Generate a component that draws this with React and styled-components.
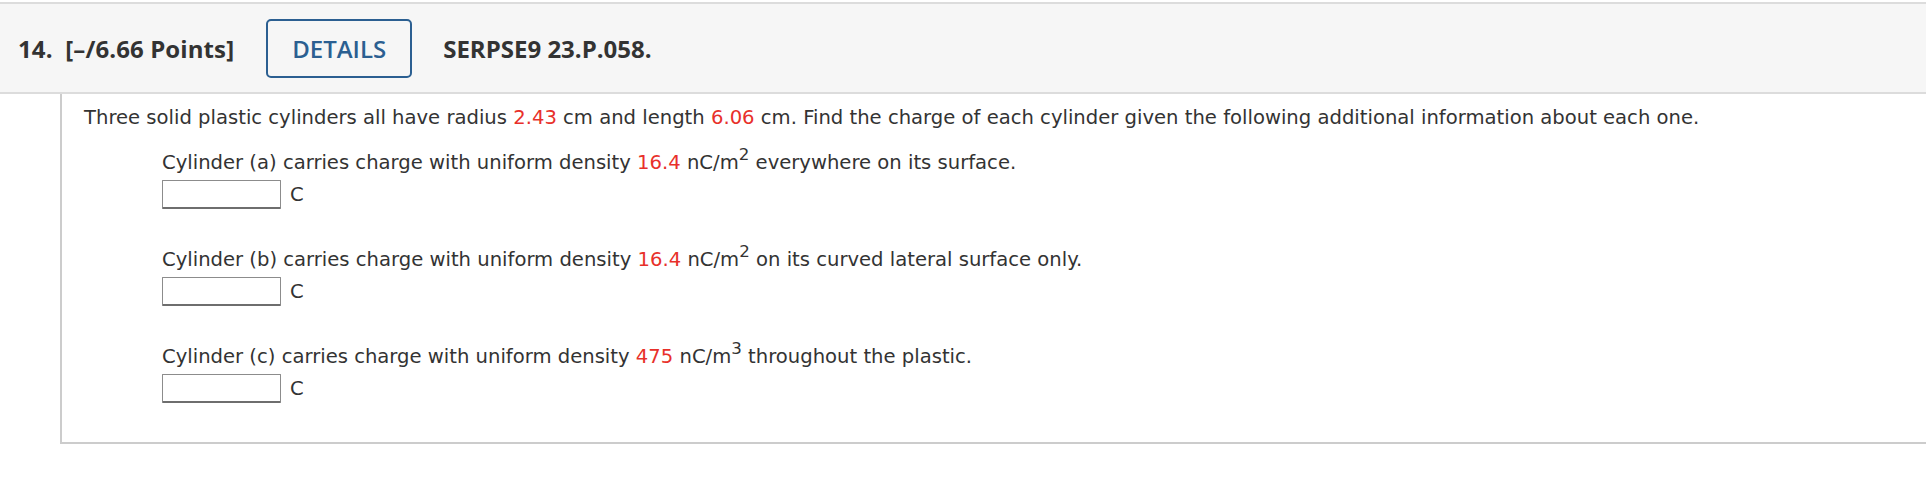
import React from 'react'
import styled, { createGlobalStyle } from 'styled-components'

const GlobalStyle = createGlobalStyle`
body {
  margin: 0;
  background: #ffffff;
}
`

// 페이지
const Page = styled.div`
padding-top: 2px;
width: 100%;
`

// 문제 헤더
const Header = styled.div`
display: flex;
align-items: center;
height: 88px;
padding-left: 18px;
background-color: #f6f6f6;
border-top: 2px solid #dcdcdc;
border-bottom: 2px solid #dcdcdc;
font-family: "Open Sans", "Liberation Sans", sans-serif;
`

const Points = styled.span`
font-size: 24px;
font-weight: 700;
color: #333333;
white-space: pre;
letter-spacing: 0.1px;
`

const DetailsButton = styled.button`
margin-left: 32px;
width: 146px;
height: 59px;
padding: 0;
border: 2px solid #2b5f91;
border-radius: 5px;
background: transparent;
color: #2b5f91;
font-family: "Open Sans", "Liberation Sans", sans-serif;
font-size: 24px;
font-weight: 600;
cursor: pointer;
`

const Code = styled.span`
margin-left: 31px;
font-size: 24px;
font-weight: 700;
color: #333333;
`

// 문제 본문
const Body = styled.div`
margin-left: 60px;
height: 350px;
padding: 12px 0 0 22px;
box-sizing: border-box;
border-left: 2px solid #cccccc;
border-bottom: 2px solid #cccccc;
font-family: "DejaVu Sans", Verdana, sans-serif;
font-size: 19.6px;
line-height: 24px;
color: #333333;
`

const Intro = styled.p`
margin: 0;
`

const Red = styled.span`
color: #e8302a;
`

const Sup = styled.sup`
font-size: 0.85em;
line-height: 0;
vertical-align: 0.55em;
`

const Part = styled.div`
margin-left: 78px;
margin-top: ${p => p.$first ? '21px' : '39px'};
`

const Prompt = styled.p`
margin: 0;
`

const AnswerRow = styled.div`
display: flex;
align-items: center;
gap: 9px;
margin-top: 5px;
`

const AnswerInput = styled.input`
box-sizing: border-box;
width: 119px;
height: 29px;
margin: 0;
border: 1px solid #8c8c8c;
border-bottom: 2px solid #6e6e6e;
border-radius: 1px;
background: #ffffff;
`

const Unit = styled.span`
font-size: 19.6px;
`

function App() {
  const parts = [
    { label: '(a)', value: '16.4', unit: 'nC/m', exp: '2', rest: ' everywhere on its surface.' },
    { label: '(b)', value: '16.4', unit: 'nC/m', exp: '2', rest: ' on its curved lateral surface only.' },
    { label: '(c)', value: '475', unit: 'nC/m', exp: '3', rest: ' throughout the plastic.' },
  ]

  return (
    <Page>
      <GlobalStyle />
      <Header>
        <Points>14.  [–/6.66 Points]</Points>
        <DetailsButton>DETAILS</DetailsButton>
        <Code>SERPSE9 23.P.058.</Code>
      </Header>
      <Body>
        <Intro>
          Three solid plastic cylinders all have radius <Red>2.43</Red> cm and length <Red>6.06</Red> cm. Find the charge of each cylinder given the following additional information about each one.
        </Intro>
        {parts.map((p, i) => (
          <Part key={p.label} $first={i === 0}>
            <Prompt>
              Cylinder {p.label} carries charge with uniform density <Red>{p.value}</Red> {p.unit}<Sup>{p.exp}</Sup>{p.rest}
            </Prompt>
            <AnswerRow>
              <AnswerInput type="text" />
              <Unit>C</Unit>
            </AnswerRow>
          </Part>
        ))}
      </Body>
    </Page>
  )
}

export default App
